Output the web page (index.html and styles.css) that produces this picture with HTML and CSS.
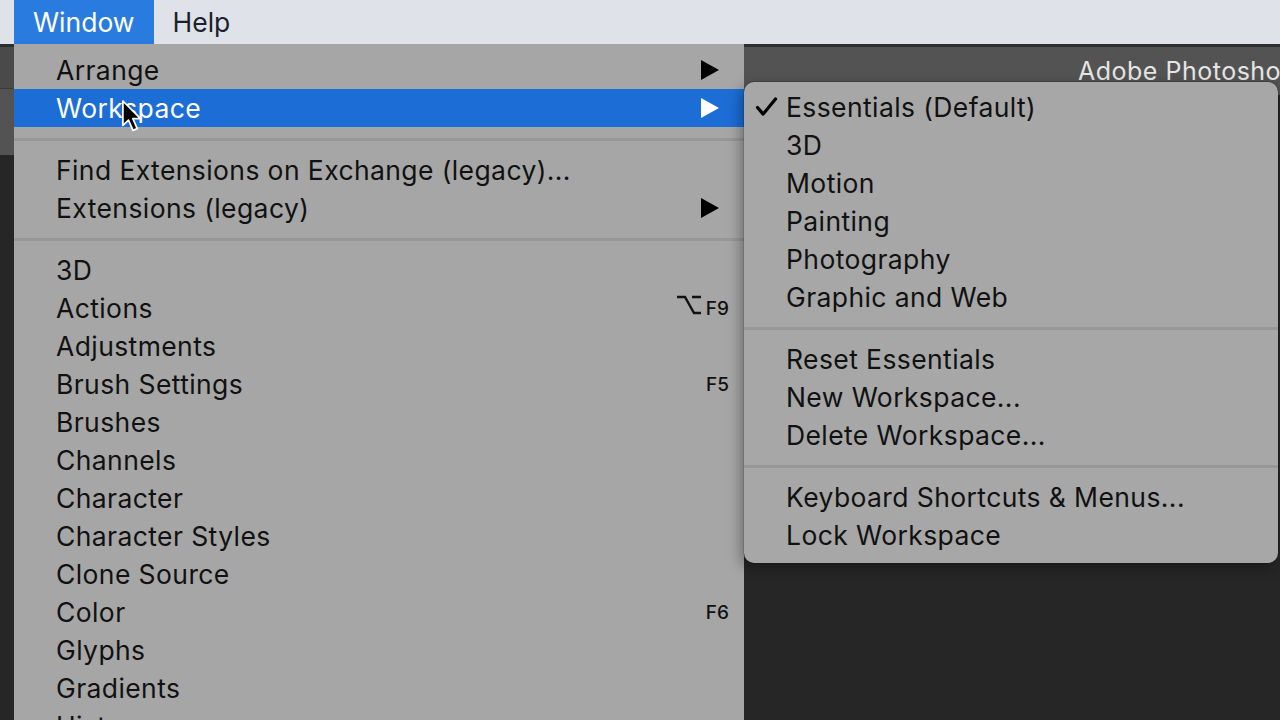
FILE: index.html
```html
<!DOCTYPE html>
<html lang="en">
<head>
<meta charset="utf-8">
<title>Window menu</title>
<link rel="stylesheet" href="styles.css">
</head>
<body>
<div class="screen">
  <header class="menubar">
    <span class="mb-item active">Window</span>
    <span class="mb-item">Help</span>
  </header>

  <div class="body-row">
    <div class="rail">
      <div class="rail-top"></div>
      <div class="rail-tools"></div>
    </div>

    <nav class="menu main-menu">
      <div class="item"><span class="label">Arrange</span><svg class="arrow" viewBox="0 0 18 20"><polygon points="0,0 18,10 0,20"/></svg></div>
      <div class="item hl"><span class="label">Workspace</span><svg class="arrow" viewBox="0 0 18 20"><polygon points="0,0 18,10 0,20"/></svg></div>
      <div class="sep"></div>
      <div class="item"><span class="label">Find Extensions on Exchange (legacy)...</span></div>
      <div class="item"><span class="label">Extensions (legacy)</span><svg class="arrow" viewBox="0 0 18 20"><polygon points="0,0 18,10 0,20"/></svg></div>
      <div class="sep"></div>
      <div class="item"><span class="label">3D</span></div>
      <div class="item"><span class="label">Actions</span><span class="key"><svg class="opt" viewBox="0 0 26 20"><path d="M1 2 H9 L18 18 H25 M16 2 H25"/></svg>F9</span></div>
      <div class="item"><span class="label">Adjustments</span></div>
      <div class="item"><span class="label">Brush Settings</span><span class="key">F5</span></div>
      <div class="item"><span class="label">Brushes</span></div>
      <div class="item"><span class="label">Channels</span></div>
      <div class="item"><span class="label">Character</span></div>
      <div class="item"><span class="label">Character Styles</span></div>
      <div class="item"><span class="label">Clone Source</span></div>
      <div class="item"><span class="label">Color</span><span class="key">F6</span></div>
      <div class="item"><span class="label">Glyphs</span></div>
      <div class="item"><span class="label">Gradients</span></div>
      <div class="item"><span class="label">Histogram</span></div>
    </nav>

    <div class="app">
      <div class="titlebar">Adobe Photoshop</div>
      <div class="canvas"></div>
    </div>
  </div>

  <nav class="menu submenu">
    <div class="item sub"><span class="check"><svg viewBox="0 0 24 20"><path d="M2.5 11 L8.5 18 L21.5 2"/></svg></span><span class="label">Essentials (Default)</span></div>
    <div class="item sub"><span class="check"></span><span class="label">3D</span></div>
    <div class="item sub"><span class="check"></span><span class="label">Motion</span></div>
    <div class="item sub"><span class="check"></span><span class="label">Painting</span></div>
    <div class="item sub"><span class="check"></span><span class="label">Photography</span></div>
    <div class="item sub"><span class="check"></span><span class="label">Graphic and Web</span></div>
    <div class="sep"></div>
    <div class="item sub"><span class="check"></span><span class="label">Reset Essentials</span></div>
    <div class="item sub"><span class="check"></span><span class="label">New Workspace...</span></div>
    <div class="item sub"><span class="check"></span><span class="label">Delete Workspace...</span></div>
    <div class="sep"></div>
    <div class="item sub"><span class="check"></span><span class="label">Keyboard Shortcuts &amp; Menus...</span></div>
    <div class="item sub"><span class="check"></span><span class="label">Lock Workspace</span></div>
  </nav>

  <svg class="cursor" viewBox="0 0 20 27">
    <path d="M1.5 1.5 L1.5 21 L6 16.8 L9.6 25 L13 23.6 L9.5 15.6 L15.6 15.6 Z"/>
  </svg>
</div>
</body>
</html>
```

FILE: styles.css
```css
html, body {
  margin: 0;
  padding: 0;
}

body {
  width: 1280px;
  height: 720px;
  overflow: hidden;
  background: #262626;
  font-family: Inter, "Liberation Sans", "DejaVu Sans", sans-serif;
}

.screen {
  position: relative;
  width: 1280px;
  height: 720px;
  overflow: hidden;
  display: flex;
  flex-direction: column;
}

/* system menu bar */
.menubar {
  height: 44px;
  flex-shrink: 0;
  display: flex;
  padding-left: 14px;
  background: #dfe3e9;
}

.mb-item {
  padding: 0 19px;
  font-size: 26.5px;
  line-height: 44px;
  color: #1b222c;
}

.mb-item.active {
  background: #2a7be0;
  color: #fff;
}

.body-row {
  flex: 1;
  display: flex;
  min-height: 0;
}

/* sliver of the tool rail on the far left */
.rail {
  width: 14px;
  flex-shrink: 0;
  display: flex;
  flex-direction: column;
}

.rail-top {
  height: 41px;
  border-top: 3px solid #2e2e2e;
  background: #4a4a4a;
  border-bottom: 1px solid #3a3a3a;
}

.rail-tools {
  height: 66px;
  background: #535353;
}

/* drop-down menus */
.menu {
  background: #a6a6a6;
  color: #111;
}

.main-menu {
  width: 730px;
  flex-shrink: 0;
  padding-top: 7px;
  overflow: hidden;
}

.item {
  height: 38px;
  display: flex;
  align-items: center;
  padding: 0 15px 0 42px;
  font-size: 26.5px;
  letter-spacing: 0.4px;
  white-space: nowrap;
}

.item.hl {
  background: #1c6dd6;
  color: #fff;
}

.label {
  flex: 1;
}

.arrow {
  width: 18px;
  height: 20px;
  margin-right: 10px;
  fill: #000;
}

.item.hl .arrow {
  fill: #fff;
}

.key {
  display: flex;
  align-items: center;
  gap: 4px;
  font-size: 19px;
  font-weight: 500;
  letter-spacing: 0;
  color: #111;
}

.opt {
  width: 26px;
  height: 20px;
  fill: none;
  stroke: #111;
  stroke-width: 2.4;
  margin-top: -6px;
}

.sep {
  height: 24px;
  display: flex;
  align-items: center;
}

.sep::before {
  content: "";
  flex: 1;
  height: 3px;
  background: #979797;
}

/* application area behind the menus */
.app {
  flex: 1;
  display: flex;
  flex-direction: column;
  min-width: 0;
}

.titlebar {
  height: 48px;
  border-top: 3px solid #2f2f2f;
  background: #535353;
  color: #e6e6e6;
  font-size: 25px;
  letter-spacing: 0.5px;
  line-height: 48px;
  padding-left: 334px;
  white-space: nowrap;
  overflow: hidden;
}

.canvas {
  flex: 1;
  background: #262626;
}

/* cascading submenu */
.submenu {
  position: absolute;
  left: 744px;
  top: 82px;
  width: 534px;
  padding: 6px 0 9px;
  border-radius: 10px;
  background: #a7a7a7;
  box-shadow: -3px 4px 14px rgba(0, 0, 0, 0.35), 0 0 0 0.5px rgba(0, 0, 0, 0.25);
}

.item.sub {
  padding-left: 11px;
}

.check {
  width: 31px;
  flex-shrink: 0;
  display: flex;
  align-items: center;
}

.check svg {
  width: 23px;
  height: 19px;
  fill: none;
  stroke: #000;
  stroke-width: 3.4;
  stroke-linecap: round;
  stroke-linejoin: round;
  margin-top: -2px;
}

/* mouse pointer */
.cursor {
  position: absolute;
  left: 121px;
  top: 99px;
  width: 25px;
  height: 34px;
}

.cursor path {
  fill: #000;
  stroke: #fff;
  stroke-width: 1.4;
  stroke-linejoin: round;
}
```
